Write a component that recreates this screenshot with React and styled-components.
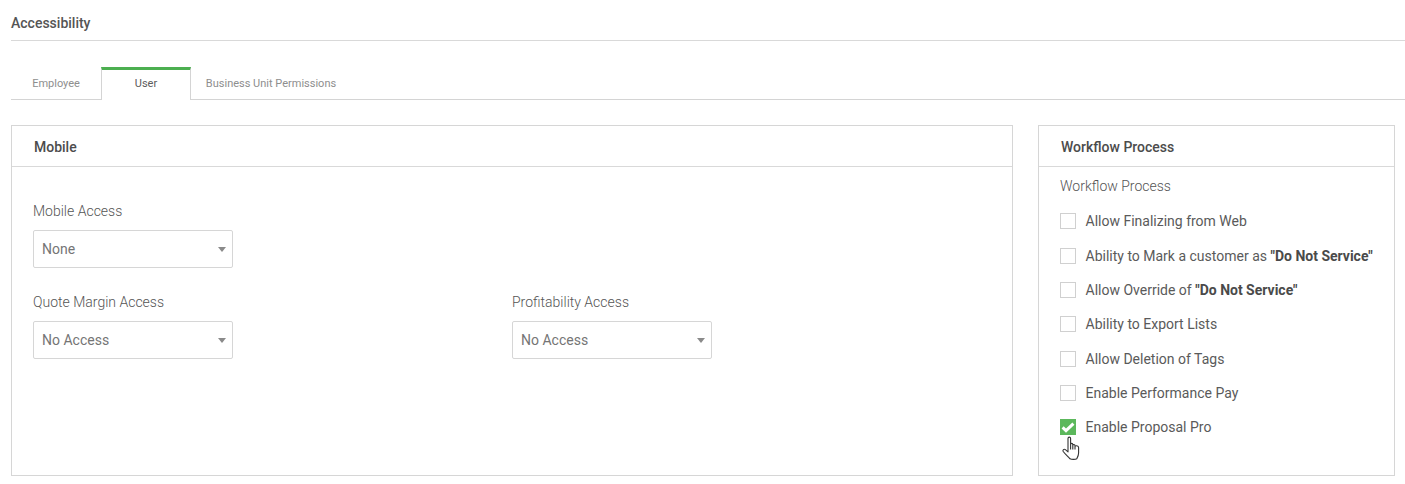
import React from "react";
import styled, { createGlobalStyle } from "styled-components";

const GlobalStyle = createGlobalStyle`
  html, body {
    margin: 0;
    padding: 0;
    background: #fff;
    font-family: Roboto, "Liberation Sans", sans-serif;
  }
`;

const Page = styled.div`
  width: 1405px;
  height: 484px;
  padding-left: 11px;
  box-sizing: border-box;
  overflow: hidden;
`;

const PageTitle = styled.h2`
  margin: 0;
  height: 40px;
  line-height: 46px;
  font-size: 14px;
  font-weight: 500;
  color: #555;
  border-bottom: 1px solid #d9d9d9;
  box-sizing: content-box;
`;

const Tabs = styled.div`
  display: flex;
  margin-top: 26px;
  height: 33px;
  border-bottom: 1px solid #d4d4d4;
  box-sizing: border-box;
`;

const Tab = styled.div`
  box-sizing: border-box;
  height: ${(p) => (p.$active ? "33px" : "32px")};
  width: ${(p) => p.$width}px;
  padding-right: ${(p) => p.$shift || 0}px;
  text-align: center;
  font-size: 11px;
  line-height: 33px;
  color: ${(p) => (p.$active ? "#5c5c5c" : "#8e8e8e")};
  background: #fff;
  ${(p) =>
    p.$active &&
    `
    border-top: 3px solid #4caf50;
    border-left: 1px solid #d4d4d4;
    border-right: 1px solid #d4d4d4;
    line-height: 28px;
  `}
`;

const Columns = styled.div`
  display: flex;
  gap: 25px;
  margin-top: 25px;
`;

const Panel = styled.section`
  box-sizing: border-box;
  width: ${(p) => p.$width}px;
  height: 351px;
  border: 1px solid #d6d6d6;
`;

const PanelHeader = styled.h3`
  margin: 0;
  height: 41px;
  box-sizing: border-box;
  padding-left: 22px;
  line-height: 42px;
  font-size: 14px;
  font-weight: 500;
  color: #4c4c4c;
  border-bottom: 1px solid #d9d9d9;
`;

const MobileBody = styled.div`
  padding: 36px 21px 0;
  display: flex;
  flex-direction: column;
  gap: 26px;
`;

const FieldRow = styled.div`
  display: grid;
  grid-template-columns: 479px 200px;
`;

const Field = styled.div`
  display: flex;
  flex-direction: column;
`;

const FieldLabel = styled.label`
  font-size: 14px;
  font-weight: 300;
  line-height: 16px;
  color: #555;
  margin-bottom: 11px;
`;

const Select = styled.div`
  box-sizing: border-box;
  width: 200px;
  height: 38px;
  border: 1px solid #d6d6d6;
  border-radius: 2px;
  padding: 0 6px 0 8px;
  display: flex;
  align-items: center;
  justify-content: space-between;
  font-size: 14px;
  color: #757575;
`;

const Caret = styled.span`
  width: 0;
  height: 0;
  border-left: 4px solid transparent;
  border-right: 4px solid transparent;
  border-top: 5px solid #8a8a8a;
  margin-top: 1px;
`;

const WorkflowBody = styled.div`
  padding: 11px 0 0 21px;
`;

const GroupLabel = styled.div`
  font-size: 14px;
  font-weight: 300;
  line-height: 16px;
  color: #555;
  margin-bottom: 10.25px;
`;

const CheckList = styled.div`
  display: flex;
  flex-direction: column;
`;

const CheckRow = styled.div`
  height: 34.3px;
  display: flex;
  align-items: center;
  gap: 9.5px;
  font-size: 14px;
  color: #5a5a5a;
  white-space: nowrap;
  position: relative;
  strong {
    font-weight: 700;
    color: #4a4a4a;
  }
`;

const Box = styled.span`
  box-sizing: border-box;
  width: 16px;
  height: 16px;
  flex: none;
  border: 1px solid ${(p) => (p.$checked ? "#5cb85c" : "#d0d0d0")};
  background: ${(p) => (p.$checked ? "#5cb85c" : "#fff")};
  display: flex;
  align-items: center;
  justify-content: center;
`;

const Pointer = styled.svg`
  position: absolute;
  left: 2px;
  top: 26px;
  width: 18px;
  height: 24px;
`;

const items = [
  <>Allow Finalizing from Web</>,
  <>
    Ability to Mark a customer as <strong>"Do Not Service"</strong>
  </>,
  <>
    Allow Override of <strong>"Do Not Service"</strong>
  </>,
  <>Ability to Export Lists</>,
  <>Allow Deletion of Tags</>,
  <>Enable Performance Pay</>,
];

const SelectField = ({ label, value }) => (
  <Field>
    <FieldLabel>{label}</FieldLabel>
    <Select>
      {value}
      <Caret />
    </Select>
  </Field>
);

export default function App() {
  return (
    <Page>
      <GlobalStyle />
      <PageTitle>Accessibility</PageTitle>
      <Tabs>
        <Tab $width={90}>Employee</Tab>
        <Tab $width={90} $active>
          User
        </Tab>
        <Tab $width={162} $shift={2}>
          Business Unit Permissions
        </Tab>
      </Tabs>
      <Columns>
        <Panel $width={1002}>
          <PanelHeader>Mobile</PanelHeader>
          <MobileBody>
            <FieldRow>
              <SelectField label="Mobile Access" value="None" />
            </FieldRow>
            <FieldRow>
              <SelectField label="Quote Margin Access" value="No Access" />
              <SelectField label="Profitability Access" value="No Access" />
            </FieldRow>
          </MobileBody>
        </Panel>
        <Panel $width={357}>
          <PanelHeader>Workflow Process</PanelHeader>
          <WorkflowBody>
            <GroupLabel>Workflow Process</GroupLabel>
            <CheckList>
              {items.map((text, i) => (
                <CheckRow key={i}>
                  <Box />
                  <span>{text}</span>
                </CheckRow>
              ))}
              <CheckRow>
                <Box $checked>
                  <svg width="14" height="11" viewBox="0 0 14 11">
                    <path d="M1.6 5.4 L5 8.6 L12.4 1.6" fill="none" stroke="#fff" strokeWidth="3" />
                  </svg>
                </Box>
                <span>Enable Proposal Pro</span>
                <Pointer viewBox="0 0 18 24">
                  <path
                    d="M6 15 V2.5 C6 .6 8.6 .6 8.6 2.5 V8.5 C8.6 7 10.8 7 10.8 8.5 V9.5 C10.8 8.2 13 8.2 13 9.5 V10.5 C13 9.4 16.6 9.4 16.6 11.5 V17 C16.6 19 16 20.5 14.8 22.8 C13.5 23.6 9.5 23.6 8 22.8 C6 20.5 3.5 18.5 1.2 15.5 C.4 14 2 12.6 3.4 13.6 L6 15.8 Z M8.6 8.5 V13.5 M10.8 9.5 V13.5 M13 10.5 V13.5"
                    fill="#fff"
                    stroke="#333"
                    strokeWidth="1.1"
                    strokeLinejoin="round"
                  />
                </Pointer>
              </CheckRow>
            </CheckList>
          </WorkflowBody>
        </Panel>
      </Columns>
    </Page>
  );
}
